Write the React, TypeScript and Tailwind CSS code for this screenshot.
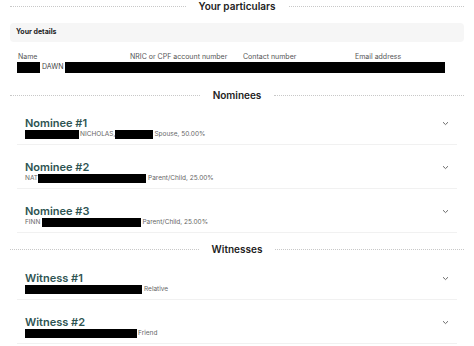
const FONT = "font-['Inter','Liberation_Sans',sans-serif]";

function SectionHeading({ title, className = "" }: { title: string; className?: string }) {
  return (
    <div className={`flex h-[12px] items-center gap-[13px] ${className}`}>
      <div className="flex-1 border-t border-dotted border-[#c8c8c8]" />
      <div className="text-[10px] font-semibold leading-[12px] text-[#222]">{title}</div>
      <div className="flex-1 border-t border-dotted border-[#c8c8c8]" />
    </div>
  );
}

function Redact({ w }: { w: number }) {
  return <span className="inline-block h-[9px] bg-black" style={{ width: w }} />;
}

function Chevron() {
  return (
    <svg width="7" height="5" viewBox="0 0 7 5" className="shrink-0">
      <path d="M1 1.2 L3.5 3.6 L6 1.2" fill="none" stroke="#6b6b6b" strokeWidth="1" />
    </svg>
  );
}

type Row = { title: string; sub: React.ReactNode };

function Item({ title, sub }: Row) {
  return (
    <div className="ml-[7px] mr-[7px] flex items-start border-b border-[#f1f1f1] pb-[5px] pl-[8px] pr-[8px] pt-[16px]">
      <div className="flex-1">
        <div className="text-[11px] font-semibold leading-[12px] text-[#2e5452]">{title}</div>
        <div className="flex h-[10px] items-center text-[6.5px] leading-[10px] text-[#666]">{sub}</div>
      </div>
      <div className="mt-[4px]">
        <Chevron />
      </div>
    </div>
  );
}

const nominees: Row[] = [
  {
    title: "Nominee #1",
    sub: (
      <>
        <Redact w={54} />
        <span className="ml-[1px]">NICHOLAS,</span>
        <Redact w={38} />
        <span className="ml-[1px]">Spouse, 50.00%</span>
      </>
    ),
  },
  {
    title: "Nominee #2",
    sub: (
      <>
        <span>NAT</span>
        <Redact w={108} />
        <span className="ml-[2px]">Parent/Child, 25.00%</span>
      </>
    ),
  },
  {
    title: "Nominee #3",
    sub: (
      <>
        <span>FINN</span>
        <span className="ml-[2px]" />
        <Redact w={99} />
        <span className="ml-[1px]">Parent/Child, 25.00%</span>
      </>
    ),
  },
];

const witnesses: Row[] = [
  {
    title: "Witness #1",
    sub: (
      <>
        <Redact w={117} />
        <span className="ml-[2px]">Relative</span>
      </>
    ),
  },
  {
    title: "Witness #2",
    sub: (
      <>
        <Redact w={112} />
        <span className="ml-[1px]">Friend</span>
      </>
    ),
  },
];

export default function App() {
  return (
    <div className={`h-[346px] w-[474px] overflow-hidden bg-white px-[10px] ${FONT}`}>
      <SectionHeading title="Your particulars" />

      <div className="mt-[11px] flex h-[19px] items-center rounded-[4px] bg-[#f6f6f6] px-[6px] text-[7px] font-bold text-[#222]">
        Your details
      </div>

      <div className="mt-[10px] grid grid-cols-[112px_113px_112px_1fr] px-[8px] text-[7px] leading-[9px] text-[#555]">
        <span>Name</span>
        <span>NRIC or CPF account number</span>
        <span>Contact number</span>
        <span>Email address</span>
      </div>

      <div className="mt-[1px] flex h-[11px] items-center pl-[7px] text-[7px] text-[#444]">
        <span className="inline-block h-[11px] w-[23px] bg-black" />
        <span className="ml-[2px]">DAWN</span>
        <span className="ml-[2px] inline-block h-[11px] w-[380px] bg-black" />
      </div>

      <SectionHeading title="Nominees" className="mt-[16px]" />
      {nominees.map((n) => (
        <Item key={n.title} {...n} />
      ))}

      <SectionHeading title="Witnesses" className="mt-[10px]" />
      <div className="mt-[1px]">
        {witnesses.map((w) => (
          <Item key={w.title} {...w} />
        ))}
      </div>
    </div>
  );
}
